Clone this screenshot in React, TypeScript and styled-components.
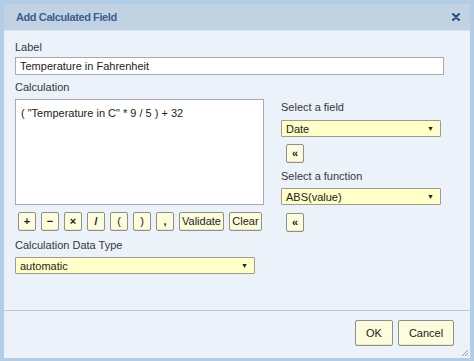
import React from 'react'
import styled, { createGlobalStyle } from 'styled-components'

const Global = createGlobalStyle`
  html, body {
    margin: 0;
    padding: 0;
    background: #ffffff;
  }
  body {
    font-family: "Liberation Sans", Arial, sans-serif;
    font-size: 11px;
    color: #333333;
  }
`

const Dialog = styled.div`
  width: 474px;
  height: 361px;
  box-sizing: border-box;
  border: 4px solid #b4cde6;
  border-bottom-width: 3px;
  background: #ebf2fa;
  display: flex;
  flex-direction: column;
  position: relative;
`

const Header = styled.div`
  height: 27px;
  background: #c1d3e3;
  display: flex;
  align-items: center;
  justify-content: space-between;
  padding: 0 10px 0 12px;
  border-bottom: 1px solid #d6e2ee;
  box-sizing: border-box;
`

const Title = styled.div`
  font-weight: bold;
  font-size: 11px;
  letter-spacing: -0.4px;
  color: #3e5d8f;
`

const Body = styled.div`
  flex: 1;
  padding: 9px 26px 0 11px;
`

const FieldLabel = styled.div<{ $top?: number }>`
  line-height: 14px;
  margin-top: ${(p) => p.$top ?? 0}px;
  color: #383838;
`

const Slot = styled.div<{ $top: number; $indent?: number }>`
  margin-top: ${(p) => p.$top}px;
  padding-left: ${(p) => p.$indent ?? 0}px;
`

const TextInput = styled.div`
  height: 18px;
  box-sizing: border-box;
  margin-top: 3px;
  background: #fff;
  border: 1px solid #a8abb0;
  padding: 0 4px;
  line-height: 16px;
  color: #222;
`

const Columns = styled.div`
  display: flex;
  gap: 17px;
  margin-top: 5px;
`

const LeftCol = styled.div`
  width: 249px;
`

const RightCol = styled.div`
  width: 160px;
  padding-top: 1px;
`

const TextArea = styled.div`
  height: 106px;
  box-sizing: border-box;
  background: #fff;
  border: 1px solid #a8abb0;
  padding: 6px 5px;
  line-height: 14px;
  color: #222;
`

const ButtonRow = styled.div`
  display: flex;
  gap: 5px;
  margin-top: 7px;
  padding-left: 3px;
`

const YellowButton = styled.div<{ $w?: number; $h?: number; $bold?: boolean }>`
  width: ${(p) => p.$w ?? 18}px;
  height: ${(p) => p.$h ?? 19}px;
  box-sizing: border-box;
  background: #fdfcdc;
  border: 1px solid #8f9089;
  border-radius: 2px;
  box-shadow: inset 0 -1px 0 #ece9c0;
  display: flex;
  align-items: center;
  justify-content: center;
  font-weight: ${(p) => (p.$bold ? 'bold' : 'normal')};
  color: #222;
  line-height: 1;
`

const Select = styled.div<{ $w: number }>`
  width: ${(p) => p.$w}px;
  height: 17px;
  box-sizing: border-box;
  background: #ffffc8;
  border: 1px solid #9c9c94;
  border-radius: 1px;
  display: flex;
  align-items: center;
  justify-content: space-between;
  padding: 0 6px 0 4px;
  color: #222;
`

const Arrow = styled.span`
  font-size: 7px;
  color: #222;
`

const Footer = styled.div`
  height: 48px;
  box-sizing: border-box;
  border-top: 1px solid #b5c8db;
  display: flex;
  justify-content: flex-end;
  gap: 5px;
  padding: 9px 16px 0 0;
`

const Grip = styled.svg`
  position: absolute;
  right: 1px;
  bottom: 1px;
`

const CloseIcon = () => (
  <svg width="8" height="8" viewBox="0 0 8 8">
    <path d="M1 1 L7 7 M7 1 L1 7" stroke="#2f4f86" strokeWidth="2.2" strokeLinecap="round" />
  </svg>
)

const ops = [
  { label: '+', bold: true },
  { label: '−', bold: true },
  { label: '×', bold: true },
  { label: '/', bold: true },
  { label: '(', bold: false },
  { label: ')', bold: false },
  { label: ',', bold: true },
]

const Dropdown = ({ w, value }: { w: number; value: string }) => (
  <Select $w={w}>
    {value}
    <Arrow>▼</Arrow>
  </Select>
)

export default function App() {
  return (
    <>
      <Global />
      <Dialog>
        <Header>
          <Title>Add Calculated Field</Title>
          <CloseIcon />
        </Header>
        <Body>
          <FieldLabel>Label</FieldLabel>
          <TextInput>Temperature in Fahrenheit</TextInput>
          <FieldLabel $top={5}>Calculation</FieldLabel>
          <Columns>
            <LeftCol>
              <TextArea>( "Temperature in C" * 9 / 5 ) + 32</TextArea>
              <ButtonRow>
                {ops.map((o) => (
                  <YellowButton key={o.label} $bold={o.bold}>
                    {o.label}
                  </YellowButton>
                ))}
                <YellowButton $w={45}>Validate</YellowButton>
                <YellowButton $w={33}>Clear</YellowButton>
              </ButtonRow>
              <FieldLabel $top={7}>Calculation Data Type</FieldLabel>
              <Slot $top={5}>
                <Dropdown w={240} value="automatic" />
              </Slot>
            </LeftCol>
            <RightCol>
              <FieldLabel>Select a field</FieldLabel>
              <Slot $top={6}>
                <Dropdown w={160} value="Date" />
              </Slot>
              <Slot $top={7} $indent={5}>
                <YellowButton $bold>«</YellowButton>
              </Slot>
              <FieldLabel $top={6}>Select a function</FieldLabel>
              <Slot $top={5}>
                <Dropdown w={160} value="ABS(value)" />
              </Slot>
              <Slot $top={8} $indent={5}>
                <YellowButton $bold>«</YellowButton>
              </Slot>
            </RightCol>
          </Columns>
        </Body>
        <Footer>
          <YellowButton $w={38} $h={26}>OK</YellowButton>
          <YellowButton $w={56} $h={26}>Cancel</YellowButton>
        </Footer>
        <Grip width="9" height="9" viewBox="0 0 9 9">
          <path d="M8 2 L2 8 M8 5 L5 8 M8 7.5 L7.5 8" stroke="#8a9aaa" strokeWidth="1" />
        </Grip>
      </Dialog>
    </>
  )
}
